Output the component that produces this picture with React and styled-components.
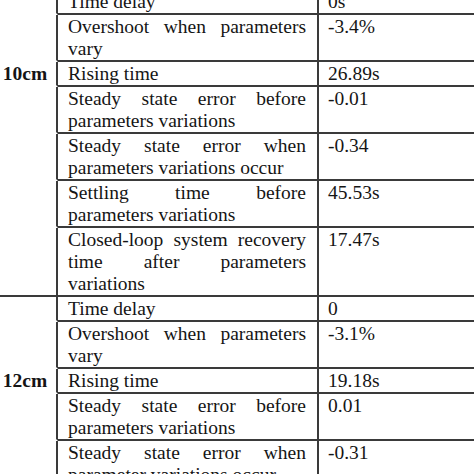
import React from "react";
import styled, { createGlobalStyle } from "styled-components";

const Global = createGlobalStyle`
  html, body { margin: 0; padding: 0; background: #fff; }
  body { width: 474px; height: 474px; overflow: hidden; }
`;

const Page = styled.div`
  width: 474px;
  height: 474px;
  overflow: hidden;
  background: #fff;
`;

const Grid = styled.div`
  display: grid;
  grid-template-columns: 64px 261px 220px;
  margin: -10px 0 0 -6px;
  font-family: "Liberation Serif", "Times New Roman", serif;
  font-size: 19.5px;
  line-height: 22px;
  color: #151515;
`;

const LabelCell = styled.div`
  border-right: 2px solid #3a3a3a;
  border-bottom: ${(p) => (p.$groupEnd ? "2px solid #3a3a3a" : "2px solid transparent")};
  padding-top: 1px;
  text-align: center;
  font-weight: bold;
`;

const NameCell = styled.div`
  border-right: 2px solid #3a3a3a;
  border-bottom: 2px solid #3a3a3a;
  padding: 1px 11px 0 10px;
  text-align: justify;
`;

const ValueCell = styled.div`
  border-bottom: 2px solid #3a3a3a;
  padding: 1px 0 0 9px;
`;

const groups = [
  {
    label: "10cm",
    rows: [
      ["Time delay", "0s"],
      ["Overshoot when parameters vary", "-3.4%"],
      ["Rising time", "26.89s", true],
      ["Steady state error before parameters variations", "-0.01"],
      ["Steady state error when parameters variations occur", "-0.34"],
      ["Settling time before parameters variations", "45.53s"],
      ["Closed-loop system recovery time after parameters variations", "17.47s"],
    ],
  },
  {
    label: "12cm",
    rows: [
      ["Time delay", "0"],
      ["Overshoot when parameters vary", "-3.1%"],
      ["Rising time", "19.18s", true],
      ["Steady state error before parameters variations", "0.01"],
      ["Steady state error when parameter variations occur", "-0.31"],
    ],
  },
];

export default function App() {
  return (
    <Page>
      <Global />
      <Grid>
        {groups.map((g) =>
          g.rows.map(([name, value, showLabel], i) => (
            <React.Fragment key={g.label + i}>
              <LabelCell $groupEnd={i === g.rows.length - 1}>
                {showLabel ? g.label : ""}
              </LabelCell>
              <NameCell>{name}</NameCell>
              <ValueCell>{value}</ValueCell>
            </React.Fragment>
          ))
        )}
      </Grid>
    </Page>
  );
}
